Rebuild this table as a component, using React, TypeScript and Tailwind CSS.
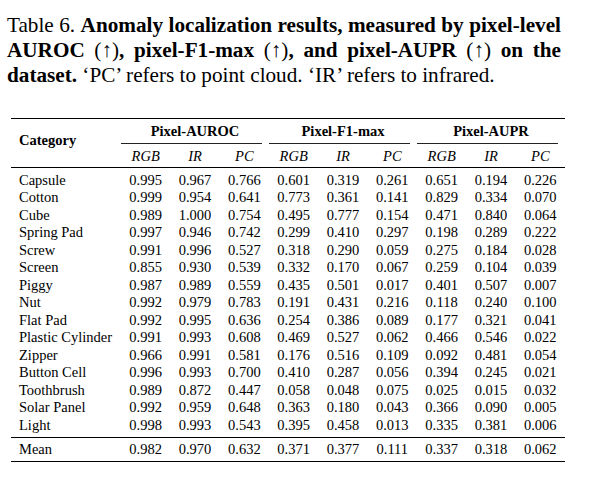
const groups = ['Pixel-AUROC', 'Pixel-F1-max', 'Pixel-AUPR'];
const subs = ['RGB', 'IR', 'PC'];

const rows: [string, string][] = [
  ['Capsule', '0.995 0.967 0.766 0.601 0.319 0.261 0.651 0.194 0.226'],
  ['Cotton', '0.999 0.954 0.641 0.773 0.361 0.141 0.829 0.334 0.070'],
  ['Cube', '0.989 1.000 0.754 0.495 0.777 0.154 0.471 0.840 0.064'],
  ['Spring Pad', '0.997 0.946 0.742 0.299 0.410 0.297 0.198 0.289 0.222'],
  ['Screw', '0.991 0.996 0.527 0.318 0.290 0.059 0.275 0.184 0.028'],
  ['Screen', '0.855 0.930 0.539 0.332 0.170 0.067 0.259 0.104 0.039'],
  ['Piggy', '0.987 0.989 0.559 0.435 0.501 0.017 0.401 0.507 0.007'],
  ['Nut', '0.992 0.979 0.783 0.191 0.431 0.216 0.118 0.240 0.100'],
  ['Flat Pad', '0.992 0.995 0.636 0.254 0.386 0.089 0.177 0.321 0.041'],
  ['Plastic Cylinder', '0.991 0.993 0.608 0.469 0.527 0.062 0.466 0.546 0.022'],
  ['Zipper', '0.966 0.991 0.581 0.176 0.516 0.109 0.092 0.481 0.054'],
  ['Button Cell', '0.996 0.993 0.700 0.410 0.287 0.056 0.394 0.245 0.021'],
  ['Toothbrush', '0.989 0.872 0.447 0.058 0.048 0.075 0.025 0.015 0.032'],
  ['Solar Panel', '0.992 0.959 0.648 0.363 0.180 0.043 0.366 0.090 0.005'],
  ['Light', '0.998 0.993 0.543 0.395 0.458 0.013 0.335 0.381 0.006'],
];

const mean: [string, string] = ['Mean', '0.982 0.970 0.632 0.371 0.377 0.111 0.337 0.318 0.062'];

function Row({ name, values }: { name: string; values: string }) {
  return (
    <div className="flex h-[17.5px] leading-[17.5px]">
      <div className="w-[110px] pl-[8px] whitespace-nowrap">{name}</div>
      {values.split(' ').map((v, i) => (
        <div key={i} className="w-[49.333px] text-center">{v}</div>
      ))}
    </div>
  );
}

export default function App() {
  return (
    <div className="w-[603px] h-[491px] bg-white text-black font-['Liberation_Serif',serif] overflow-hidden">
      {/* Caption */}
      <p className="ml-[7px] w-[554px] pt-[12.5px] text-[21.2px] leading-[25px] text-justify">
        Table 6.{' '}
        <b>
          Anomaly localization results, measured by pixel-level AUROC <span className="font-normal">(↑)</span>,
          pixel-F1-max <span className="font-normal">(↑)</span>, and pixel-AUPR{' '}
          <span className="font-normal">(↑)</span> on the dataset.
        </b>{' '}
        ‘PC’ refers to point cloud. ‘IR’ refers to infrared.
      </p>

      {/* Table */}
      <div className="ml-[11px] w-[554px] mt-[30px] text-[14.5px]">
        <div className="h-[1.5px] bg-black" />

        {/* Header */}
        <div className="flex">
          <div className="w-[110px] pl-[8px] pt-[13px] font-bold leading-[17.5px]">Category</div>
          {groups.map((g) => (
            <div key={g} className="w-[148px]">
              <div className="pt-[4px] h-[17.5px] box-content leading-[17.5px] text-center font-bold">{g}</div>
              <div className="mt-[2.4px] mr-[7px] h-px bg-[#222]" />
              <div className="flex mt-[4px] h-[17.5px] leading-[17.5px] italic">
                {subs.map((s) => (
                  <div key={s} className="w-[49.333px] text-center">{s}</div>
                ))}
              </div>
            </div>
          ))}
        </div>

        <div className="mt-[1.8px] h-px bg-black" />

        {/* Body */}
        <div className="pt-[3.7px]">
          {rows.map(([n, v]) => (
            <Row key={n} name={n} values={v} />
          ))}
        </div>

        <div className="mt-[2.5px] h-px bg-black" />
        <div className="pt-[3.4px]">
          <Row name={mean[0]} values={mean[1]} />
        </div>
        <div className="mt-[1.8px] h-[1.5px] bg-black" />
      </div>
    </div>
  );
}
